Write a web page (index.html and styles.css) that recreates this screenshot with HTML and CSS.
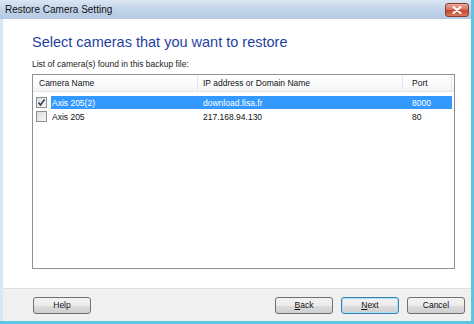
FILE: index.html
```html
<!DOCTYPE html>
<html lang="en">
<head>
  <meta charset="UTF-8" />
  <title>Restore Camera Setting</title>
  <link rel="stylesheet" href="styles.css">
</head>
<body>
  <div class="window">
    <div class="titlebar">
      <span class="title">Restore Camera Setting</span>
      <span class="close-btn">
        <svg width="10" height="8" viewBox="0 0 10 8">
          <path d="M1.5 1 L8.5 7 M8.5 1 L1.5 7" stroke="#fff" stroke-width="2" stroke-linecap="round"/>
        </svg>
      </span>
    </div>

    <div class="body">
      <div class="content">
        <h1 class="instruction">Select cameras that you want to restore</h1>
        <p class="label">List of camera(s) found in this backup file:</p>

        <div class="listview">
          <div class="list-head">
            <div class="col c1">Camera Name</div>
            <div class="col c2">IP address or Domain Name</div>
            <div class="col c3">Port</div>
            <div class="col c4"></div>
          </div>

          <div class="list-row selected">
            <span class="check checked">
              <svg width="9" height="9" viewBox="0 0 9 9">
                <path d="M1.5 4.5 L3.5 7 L7.5 1.5" fill="none" stroke="#2b3a55" stroke-width="1.4"/>
              </svg>
            </span>
            <div class="cells">
              <div class="cell c1">Axis 205(2)</div>
              <div class="cell c2">download.fisa.fr</div>
              <div class="cell c3">8000</div>
            </div>
          </div>

          <div class="list-row">
            <span class="check"></span>
            <div class="cells">
              <div class="cell c1">Axis 205</div>
              <div class="cell c2">217.168.94.130</div>
              <div class="cell c3">80</div>
            </div>
          </div>
        </div>
      </div>

      <div class="buttons">
        <button class="btn">Help</button>
        <span class="spacer"></span>
        <button class="btn"><u>B</u>ack</button>
        <button class="btn default"><u>N</u>ext</button>
        <button class="btn">Cancel</button>
      </div>
    </div>
  </div>
</body>
</html>
```

FILE: styles.css
```css
body {
  margin: 0;
  background-color: #5ec6e4;
  font-family: 'Liberation Sans', Arial, sans-serif;
}

.window {
  width: 471px;
  height: 321px;
  display: flex;
  flex-direction: column;
  background-color: #d9e6f4;
}

.titlebar {
  height: 19px;
  flex-shrink: 0;
  display: flex;
  align-items: center;
  justify-content: space-between;
  padding: 0 2px 0 5px;
  background: linear-gradient(to bottom, #dbe6f3 0%, #c4d5ea 45%, #b4c9e3 100%);
}

.title {
  font-size: 10px;
  color: #111;
}

.close-btn {
  width: 24px;
  height: 14px;
  margin-top: 1px;
  border: 1px solid #8a3c32;
  border-radius: 3px;
  background: linear-gradient(to bottom, #e9a99b 0%, #d8735f 45%, #c4442c 55%, #d77a5e 100%);
  display: flex;
  align-items: center;
  justify-content: center;
  box-sizing: border-box;
}

.body {
  flex: 1;
  margin-left: 3px;
  display: flex;
  flex-direction: column;
  background-color: #fff;
}

.content {
  flex: 1;
  padding: 0 0 0 29px;
}

.instruction {
  margin: 15px 0 0;
  font-size: 14.5px;
  font-weight: normal;
  color: #1f3f9f;
}

.label {
  margin: 9px 0 0;
  font-size: 8.5px;
  color: #222;
}

.listview {
  margin-top: 5px;
  width: 423px;
  height: 195px;
  border: 1px solid #8e9297;
  box-sizing: border-box;
  font-size: 8.5px;
  color: #111;
}

.list-head {
  display: grid;
  grid-template-columns: 165px 205px 49px 1fr;
  height: 16px;
  background: linear-gradient(to bottom, #fff 0%, #fafbfc 60%, #f1f2f4 100%);
  border-bottom: 1px solid #e3e6ea;
}

.list-head .col {
  display: flex;
  align-items: center;
  border-right: 1px solid #e3e6ea;
  padding-left: 6px;
}

.list-head .c2 {
  padding-left: 5px;
}

.list-head .c3 {
  padding-left: 9px;
}

.list-head .c4 {
  border-right: none;
}

.list-row {
  display: flex;
  height: 13px;
  margin-top: 1px;
}

.list-row.selected {
  margin-top: 4px;
}

.check {
  width: 11px;
  height: 11px;
  margin: 1px 4px 0 3px;
  box-sizing: border-box;
  border: 1px solid #8f8f8f;
  background: linear-gradient(135deg, #dcdcdc 0%, #f7f7f7 100%);
  display: flex;
  align-items: center;
  justify-content: center;
}

.cells {
  display: grid;
  grid-template-columns: 147px 205px 49px;
  align-items: center;
}

.selected .cells {
  background-color: #3399ff;
  color: #fff;
}

.cell.c1 {
  padding-left: 1px;
}

.cell.c2 {
  padding-left: 5px;
}

.cell.c3 {
  padding-left: 9px;
}

.buttons {
  height: 32px;
  flex-shrink: 0;
  display: flex;
  align-items: center;
  gap: 8px;
  padding: 0 6px 0 30px;
  background-color: #f0f0f0;
  border-top: 1px solid #dfdfdf;
}

.spacer {
  flex: 1;
}

.btn {
  width: 58px;
  height: 17px;
  padding: 0;
  font-family: 'Liberation Sans', Arial, sans-serif;
  font-size: 8.5px;
  color: #111;
  border: 1px solid #707070;
  border-radius: 3px;
  background: linear-gradient(to bottom, #f2f2f2 0%, #ebebeb 50%, #dddddd 51%, #cfcfcf 100%);
}

.btn.default {
  border-color: #3c7fb1;
  box-shadow: inset 0 0 0 1px #a8e2f8;
}
```
